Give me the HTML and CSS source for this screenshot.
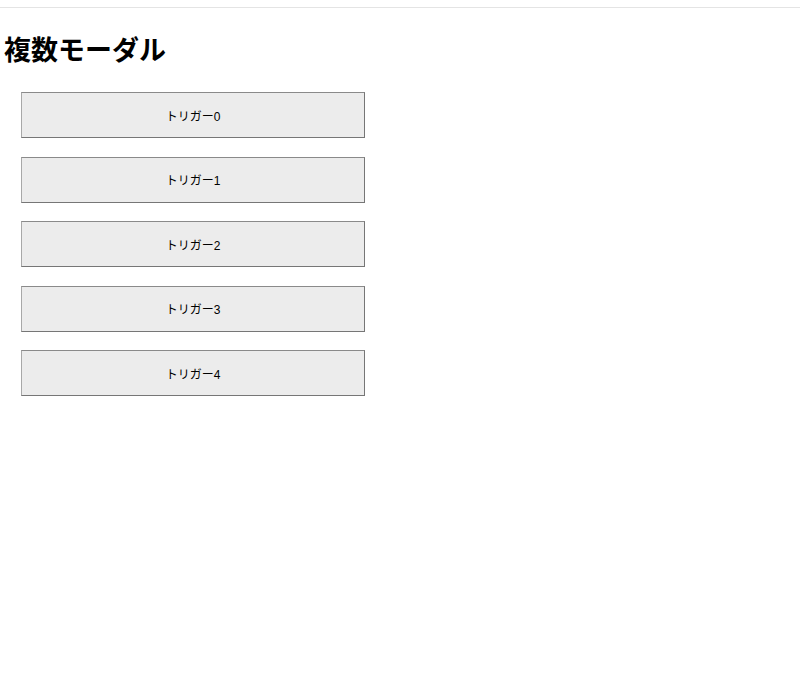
FILE: index.html
```html
<!DOCTYPE html>
<html lang="ja">
<head>
    <meta charset="UTF-8">
    <meta name="viewport" content="width=device-width, initial-scale=1.0">
    <title>複数モーダル</title>
    <link rel="stylesheet" href="styles.css">
</head>
<body>
    <div class="topbar"></div>

    <h1>複数モーダル</h1>

    <div class="triggers">
        <button class="trigger">トリガー0</button>
        <button class="trigger">トリガー1</button>
        <button class="trigger">トリガー2</button>
        <button class="trigger">トリガー3</button>
        <button class="trigger">トリガー4</button>
    </div>
</body>
</html>
```

FILE: styles.css
```css
body {
    margin: 0;
    font-family: 'Liberation Sans', 'Noto Sans CJK JP', sans-serif;
    background: #fff;
    color: #000;
}
.topbar {
    height: 7px;
    border-bottom: 1px solid #e4e4e4;
}
h1 {
    font-size: 27px;
    font-weight: bold;
    margin: 27px 0 0 4px;
    line-height: 32px;
}
.triggers {
    display: flex;
    flex-direction: column;
    gap: 18.5px;
    padding: 25px 0 0 21px;
}
.trigger {
    width: 344px;
    height: 46px;
    font-family: 'Liberation Sans', 'Noto Sans CJK JP', sans-serif;
    font-size: 12px;
    color: #000;
    background: #ececec;
    border: 1px solid #767676;
    border-left-color: #a8a8a8;
    border-top-color: #8a8a8a;
    cursor: pointer;
}
```
